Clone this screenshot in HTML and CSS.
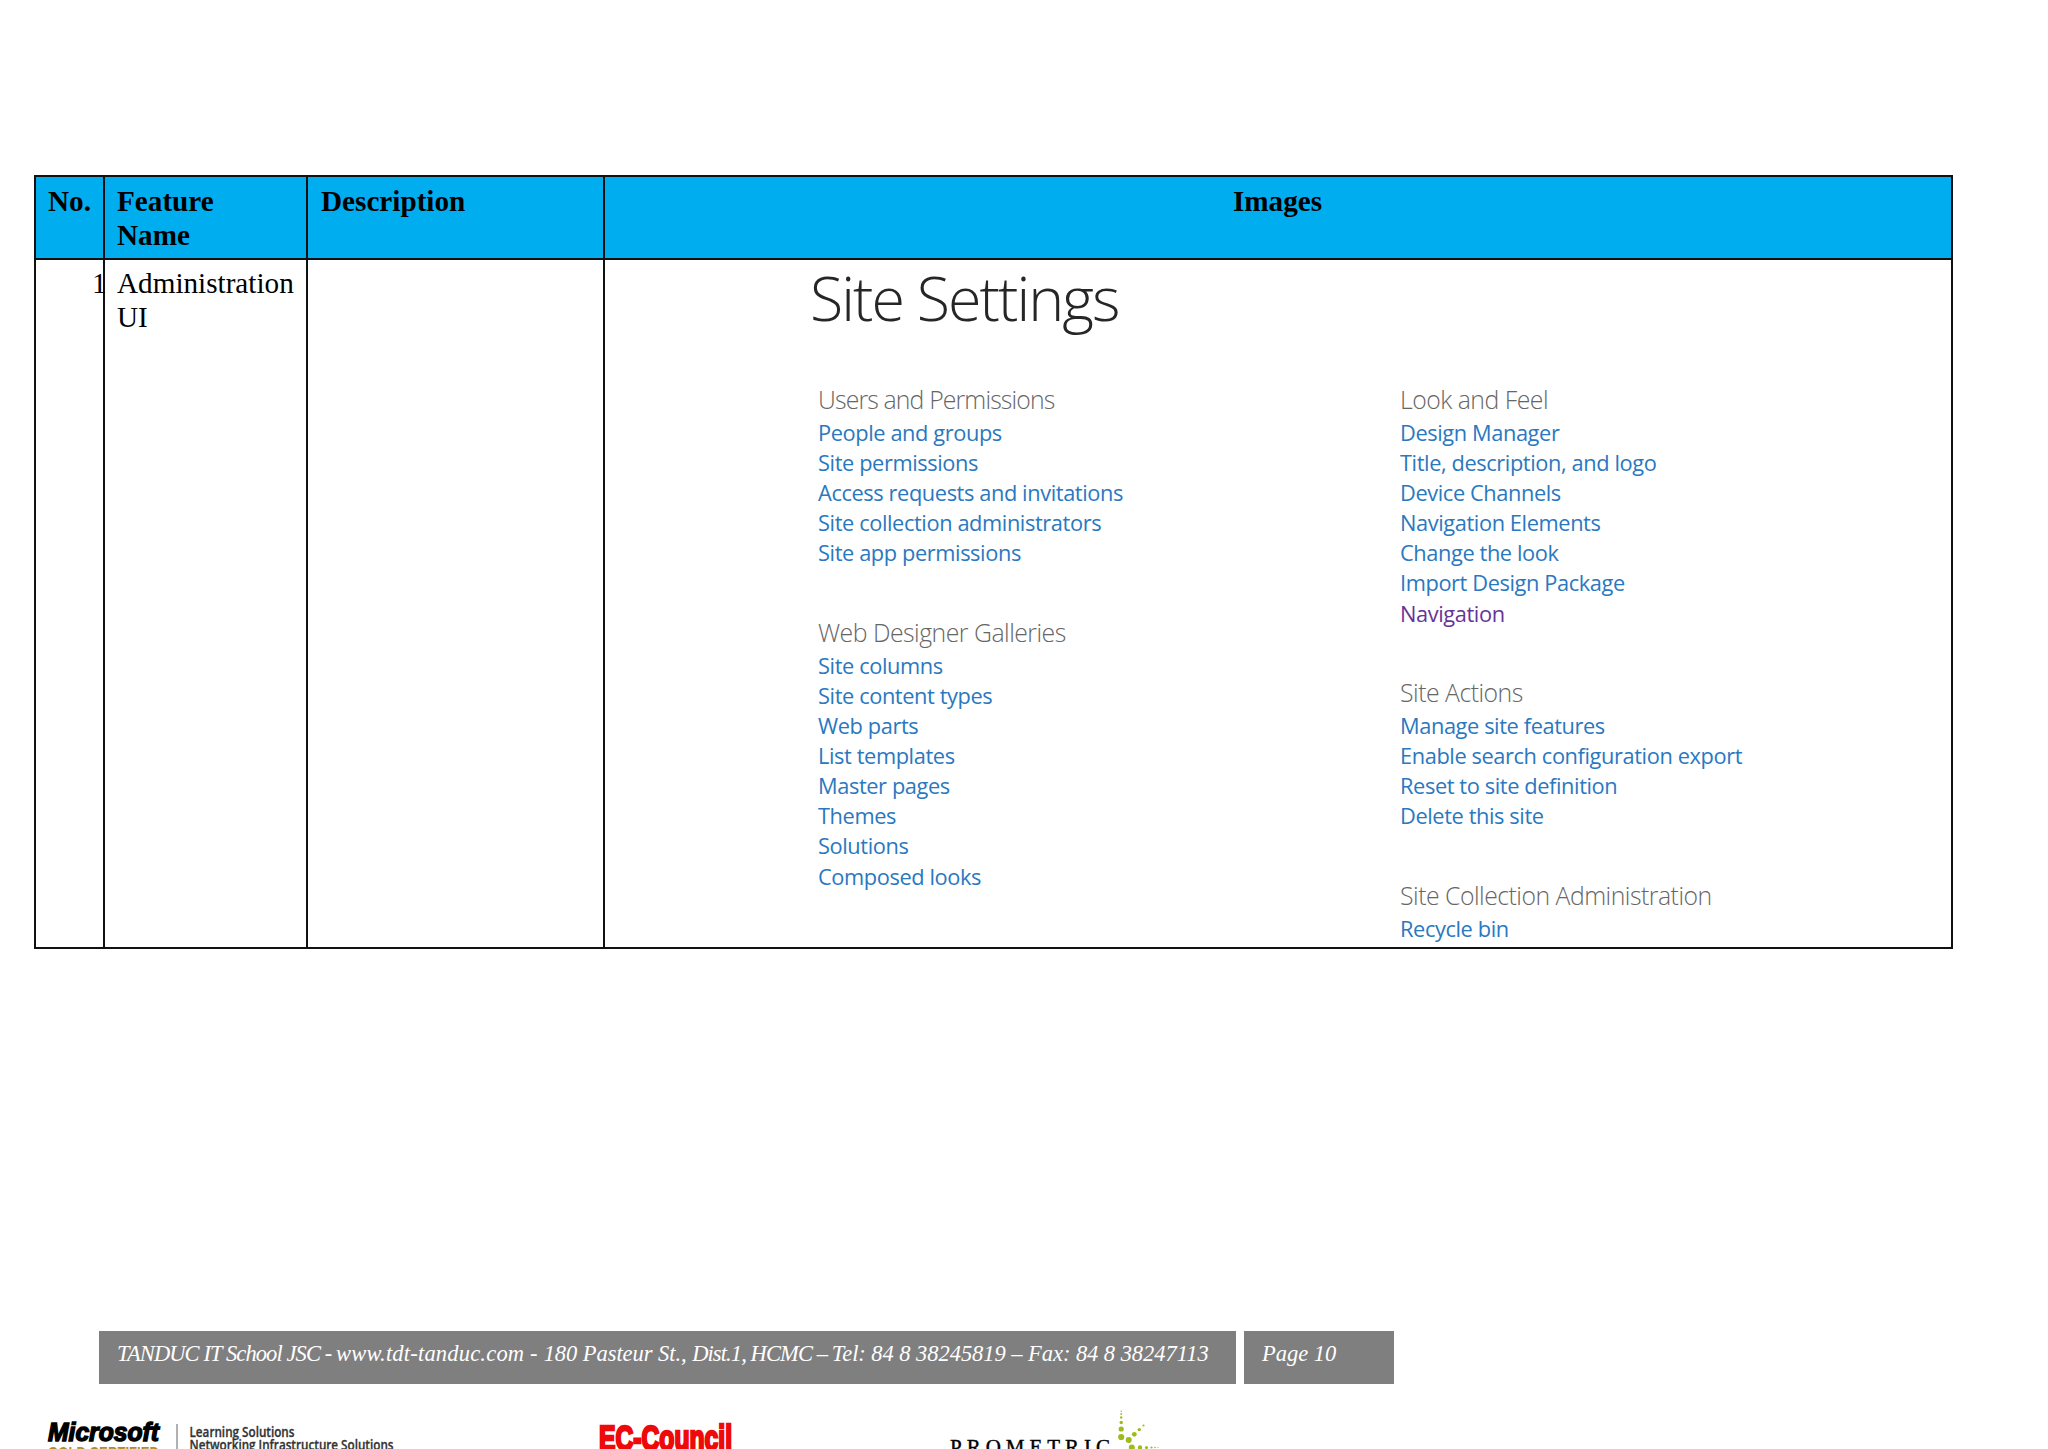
FILE: index.html
```html
<!DOCTYPE html>
<html lang="en">
<head>
  <meta charset="UTF-8" />
  <title>Site Settings</title>
  <link rel="stylesheet" href="styles.css">
</head>
<body>

  <table class="features">
    <tr>
      <th class="no">No.</th>
      <th class="name">Feature<br>Name</th>
      <th class="desc">Description</th>
      <th class="images">Images</th>
    </tr>
    <tr class="row">
      <td class="num">1</td>
      <td>Administration UI</td>
      <td></td>
      <td class="shot">
        <h1>Site Settings</h1>
        <div class="columns">
          <div class="column">
            <h2 class="narrow">Users and Permissions</h2>
            <ul>
              <li><a>People and groups</a></li>
              <li><a>Site permissions</a></li>
              <li><a>Access requests and invitations</a></li>
              <li><a>Site collection administrators</a></li>
              <li><a>Site app permissions</a></li>
            </ul>
            <h2>Web Designer Galleries</h2>
            <ul>
              <li><a>Site columns</a></li>
              <li><a>Site content types</a></li>
              <li><a>Web parts</a></li>
              <li><a>List templates</a></li>
              <li><a>Master pages</a></li>
              <li><a>Themes</a></li>
              <li><a>Solutions</a></li>
              <li><a>Composed looks</a></li>
            </ul>
          </div>
          <div class="column">
            <h2>Look and Feel</h2>
            <ul>
              <li><a>Design Manager</a></li>
              <li><a>Title, description, and logo</a></li>
              <li><a>Device Channels</a></li>
              <li><a>Navigation Elements</a></li>
              <li><a>Change the look</a></li>
              <li><a>Import Design Package</a></li>
              <li><a class="visited">Navigation</a></li>
            </ul>
            <h2>Site Actions</h2>
            <ul>
              <li><a>Manage site features</a></li>
              <li><a>Enable search configuration export</a></li>
              <li><a>Reset to site definition</a></li>
              <li><a>Delete this site</a></li>
            </ul>
            <h2>Site Collection Administration</h2>
            <ul>
              <li><a>Recycle bin</a></li>
            </ul>
          </div>
        </div>
      </td>
    </tr>
  </table>

  <div class="footer">
    <div class="address"><span class="caps">TANDUC IT School JSC - </span><span class="wide">www.tdt-tanduc.com - </span>180 Pasteur St., <span class="caps">Dist.1, HCMC – </span>Tel: 84 8 38245819 – Fax: 84 8 38247113</div>
    <div class="page">Page 10</div>
  </div>

  <div class="logos">
    <svg class="microsoft" width="380" height="49" viewBox="40 1400 380 49">
      <text class="ms" x="48" y="1441" textLength="111" lengthAdjust="spacingAndGlyphs">Microsoft</text>
      <text class="gold" x="48" y="1459" textLength="111" lengthAdjust="spacingAndGlyphs">GOLD CERTIFIED</text>
      <path d="M177 1424V1449" stroke="#888" stroke-width="1.3" />
      <text class="sol" x="189.5" y="1436.5" textLength="105" lengthAdjust="spacingAndGlyphs">Learning Solutions</text>
      <text class="sol" x="189.5" y="1450" textLength="204" lengthAdjust="spacingAndGlyphs">Networking Infrastructure Solutions</text>
    </svg>
    <svg class="ec" width="160" height="49" viewBox="590 1400 160 49">
      <text x="599" y="1449.5" textLength="133" lengthAdjust="spacingAndGlyphs">EC-Council</text>
    </svg>
    <svg class="prometric" width="240" height="49" viewBox="940 1400 240 49">
      <text x="950" y="1454" textLength="160">PROMETRIC</text>
      <g fill="#9dbb1c">
        <circle cx="1121.2" cy="1411.3" r=".7" />
        <circle cx="1121.2" cy="1414" r=".9" />
        <circle cx="1121.2" cy="1417.5" r="1.2" />
        <circle cx="1121.2" cy="1422.5" r="1.7" />
        <circle cx="1121.2" cy="1429" r="2.6" />
        <circle cx="1121.2" cy="1437" r="3.1" />
        <circle cx="1128.7" cy="1440" r="3" />
        <circle cx="1134.3" cy="1434.3" r="2.4" />
        <circle cx="1139.3" cy="1429.6" r="1.7" />
        <circle cx="1143.5" cy="1425.5" r="1.1" />
        <circle cx="1131.8" cy="1447.5" r="3" />
        <circle cx="1140" cy="1447.5" r="2.2" />
        <circle cx="1146.5" cy="1447.5" r="1.6" />
        <circle cx="1151.5" cy="1447.5" r="1.1" />
        <circle cx="1155" cy="1447.5" r=".8" />
        <circle cx="1158" cy="1447.5" r=".6" />
      </g>
    </svg>
  </div>

</body>
</html>
```
FILE: styles.css
```css
* {
  box-sizing: border-box;
}
html, body {
  margin: 0;
  padding: 0;
  height: 1449px;
  overflow: hidden;
  background: #fff;
  color: #000;
  font-family: "Liberation Serif", "Times New Roman", serif;
}
body {
  display: flex;
  flex-direction: column;
}
.features {
  width: 1919px;
  margin: 175px 0 0 34px;
  border-collapse: collapse;
  table-layout: fixed;
  font-size: 29.2px;
  line-height: 33.7px;
}
.features th, .features td {
  border: 2px solid #111;
  padding: 8px 11px 0 12px;
  text-align: left;
  vertical-align: top;
}
.features th {
  height: 83px;
  background: #00aeef;
}
.features td {
  padding-top: 7px;
}
.features .no {
  width: 69px;
}
.features .name {
  width: 203px;
}
.features .desc {
  width: 297px;
  padding-left: 13px;
}
.features .images {
  padding-right: 13px;
  text-align: center;
}
.features .row {
  height: 689px;
}
.features .num {
  padding: 7px 0 0 56px;
}
.features .shot {
  padding: 0 0 0 205px;
  font-family: "Open Sans", "Segoe UI", sans-serif;
}
h1 {
  margin: 0;
  font-size: 61px;
  font-weight: 300;
  line-height: 75px;
  letter-spacing: -2px;
  color: #262626;
}
.columns {
  display: flex;
  padding: 47px 0 0 8px;
}
.column {
  flex: 0 0 582px;
}
h2 {
  margin: 0 0 0.7px;
  font-size: 24.8px;
  font-weight: 300;
  line-height: 35px;
  letter-spacing: -0.5px;
  color: #666;
}
h2.narrow {
  letter-spacing: -0.85px;
}
ul {
  margin: 0 0 46.4px;
  padding: 0;
  list-style: none;
}
ul:last-child {
  margin-bottom: 0;
}
li {
  font-size: 21.8px;
  line-height: 30.15px;
  letter-spacing: -0.4px;
  color: #2a78c0;
}
.visited {
  color: #663399;
}
.footer {
  display: flex;
  gap: 8px;
  margin: 382px 0 0 99px;
  font-size: 22.5px;
  font-style: italic;
  line-height: 46px;
  color: #fff;
}
.address, .page {
  height: 53px;
  padding-left: 18px;
  background: #807f80;
  white-space: nowrap;
}
.address {
  width: 1137px;
  letter-spacing: -0.05px;
}
.page {
  width: 150px;
}
.caps {
  letter-spacing: -0.9px;
}
.wide {
  letter-spacing: 0.2px;
}
.logos {
  display: flex;
  margin-top: 16px;
  padding-left: 40px;
}
.ms {
  font: italic bold 25px "Liberation Sans", Arial, sans-serif;
  stroke: #000;
  stroke-width: 1.4;
}
.gold {
  font: bold 16px "Liberation Sans", Arial, sans-serif;
  fill: #b08d2c;
}
.sol {
  font: 600 13.5px "Open Sans", "Segoe UI", sans-serif;
  fill: #333;
  stroke: #333;
  stroke-width: .3;
}
.ec {
  margin-left: 170px;
}
.ec text {
  font: bold 35px "Liberation Sans", Arial, sans-serif;
  fill: #ee0a0a;
  stroke: #ee0a0a;
  stroke-width: 2.6;
}
.prometric {
  margin-left: 190px;
}
.prometric text {
  font: 21px "Liberation Serif", serif;
  stroke: #000;
  stroke-width: .4;
}
```
